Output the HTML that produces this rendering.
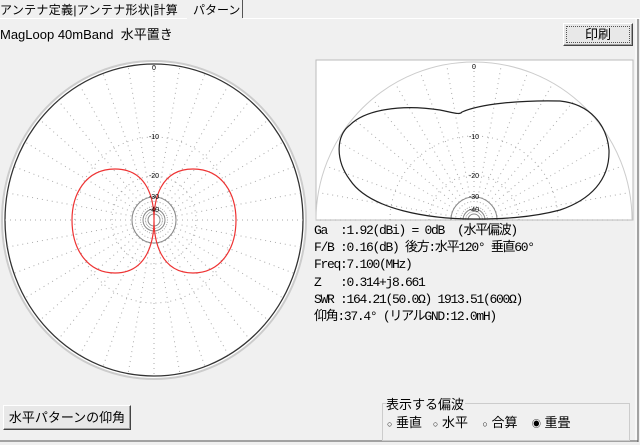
<!DOCTYPE html>
<html><head><meta charset="utf-8"><style>
body{margin:0;width:640px;height:445px;background:#f0f0f0;position:relative;overflow:hidden;font-family:"Liberation Sans","Noto Sans CJK JP",sans-serif;}
.t{position:absolute;font-size:12px;color:#000;white-space:nowrap}
.btn{position:absolute;background:#e8e8e8;border:1px solid #fff;border-right-color:#444;border-bottom-color:#444;box-shadow:inset -1px -1px 0 #a0a0a0;font-size:13px;text-align:center}
.info{position:absolute;left:314px;top:222px;font-family:"Liberation Mono","Noto Sans CJK JP",monospace;font-size:13px;letter-spacing:-1.3px;line-height:17.2px;white-space:pre;color:#000}
</style></head><body>
<div class="t" style="left:0;top:1px;font-size:12px;letter-spacing:0.3px">アンテナ定義|アンテナ形状|計算</div>
<div style="position:absolute;left:187px;top:0;width:55px;height:18px;background:#f0f0f0;border-right:1px solid #555"></div>
<div class="t" style="left:193px;top:1px;">パターン</div>
<div style="position:absolute;left:0;top:18px;width:187px;height:1px;background:#fff"></div>
<div style="position:absolute;left:243px;top:18px;width:397px;height:1px;background:#fff"></div>
<div class="t" style="left:0;top:24px;font-size:13px">MagLoop 40mBand &nbsp;水平置き</div>
<div class="btn" style="left:563px;top:23px;width:68px;height:21px;line-height:21px;outline:1px dotted #555;outline-offset:-4px">印刷</div>
<svg width="640" height="445" style="position:absolute;left:0;top:0" id="s">
<rect x="316" y="60" width="317" height="160" fill="#fff" stroke="#bbb"/>
<ellipse cx="154" cy="220" rx="152" ry="159" fill="#fff" stroke="#ccc" stroke-width="2"/>
<ellipse cx="154" cy="220" rx="149" ry="156" fill="none" stroke="#333" stroke-width="1.3"/>
<g id="g1" stroke="#aaa" stroke-dasharray="1,4" fill="none"></g>
<g fill="none" stroke="#888">
<ellipse cx="154" cy="220" rx="22" ry="23"/><ellipse cx="154" cy="220" rx="11" ry="11"/><ellipse cx="154" cy="220" rx="6" ry="6"/>
</g>
<path d="M474 62 A158 158 0 0 1 632 220 M316 220 A158 158 0 0 1 474 62" fill="none" stroke="#ccc"/>
<g fill="none" stroke="#888"><path d="M451 220 A23 23 0 0 1 497 220 M463 220 A11 11 0 0 1 485 220 M468 220 A6 6 0 0 1 480 220"/></g>
<path d="M154 220 C154 200 148 169 115 169 C85 169 72 195 72 220 C72 250 88 273 115 273 C148 273 154 240 154 220 C154 200 160 169 193 169 C223 169 236 195 236 220 C236 250 220 273 193 273 C160 273 154 240 154 220Z" fill="none" stroke="#e33" stroke-width="1.2"/>
<path d="M474 219 C430 219 370 210 350 180 C335 160 336 135 350 125 C365 110 400 104 440 110 C455 113 460 115 462 112 C480 104 520 100 560 101 C590 104 607 125 609 150 C610 180 590 200 560 210 C530 218 500 219 474 219Z" fill="none" stroke="#222" stroke-width="1.2"/>
<g font-size="7" font-family="Liberation Sans" text-anchor="middle" fill="#000">
<text x="154" y="70">0</text><text x="154" y="139">-10</text><text x="154" y="178">-20</text><text x="154" y="199">-30</text><text x="154" y="212">-40</text>
<text x="474" y="69">0</text><text x="474" y="139">-10</text><text x="474" y="178">-20</text><text x="474" y="199">-30</text><text x="474" y="212">-40</text>
</g>
<line x1="636" y1="19" x2="636" y2="441" stroke="#fff"/><line x1="638" y1="19" x2="638" y2="442" stroke="#555"/>
<line x1="0" y1="441" x2="638" y2="441" stroke="#555"/>
<rect x="382.5" y="403.5" width="247" height="37" fill="none" stroke="#ccc"/>
</svg>
<div class="info">Ga  :1.92(dBi) = 0dB  (水平偏波)
F/B :0.16(dB) 後方:水平120° 垂直60°
Freq:7.100(MHz)
Z   :0.314+j8.661
SWR :164.21(50.0Ω) 1913.51(600Ω)
仰角:37.4° (リアルGND:12.0mH)</div>
<div class="btn" style="left:3px;top:405px;width:126px;height:23px;line-height:23px">水平パターンの仰角</div>
<div class="t" style="left:386px;top:394px;font-size:13px;background:#f0f0f0;padding-right:1px">表示する偏波</div>
<div class="t" style="left:387px;top:412px;font-size:13px"><span style="font-size:9px">○</span> 垂直 &nbsp;&nbsp;<span style="font-size:9px">○</span> 水平 &nbsp;&nbsp;&nbsp;<span style="font-size:9px">○</span> 合算 &nbsp;&nbsp;&nbsp;<span style="font-size:9px">◉</span> 重畳</div>
<script>
var ns="http://www.w3.org/2000/svg",g=document.getElementById('g1');
function el(n,a){var e=document.createElementNS(ns,n);for(var k in a)e.setAttribute(k,a[k]);g.appendChild(e);}
[[154,.955,83],[154,.955,44]].forEach(function(c){el('ellipse',{cx:154,cy:220,rx:c[2]*.955,ry:c[2]});});
el('path',{d:'M390 220 A84 84 0 0 1 558 220 M429 220 A45 45 0 0 1 519 220'});
for(var a=0;a<360;a+=10){var r=a*Math.PI/180;el('line',{x1:154+8*Math.cos(r),y1:220+8*Math.sin(r),x2:154+149*Math.cos(r),y2:220+156*Math.sin(r)});}
for(var a=180;a<=360;a+=10){var r=a*Math.PI/180;el('line',{x1:474+8*Math.cos(r),y1:220+8*Math.sin(r),x2:474+158*Math.cos(r),y2:220+158*Math.sin(r)});}
</script>
</body></html>
